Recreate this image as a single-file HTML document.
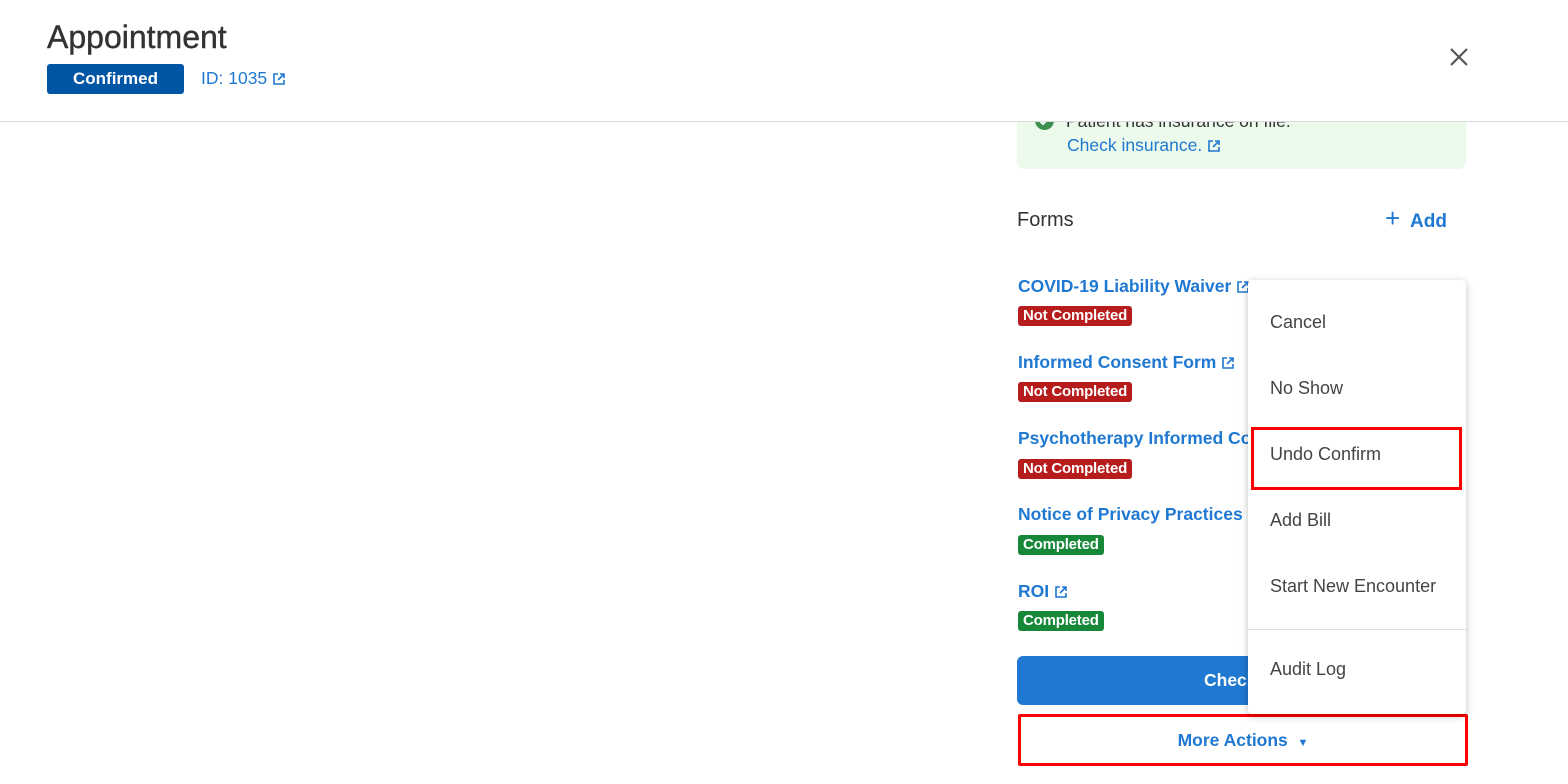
<!DOCTYPE html>
<html><head><meta charset="utf-8"><style>
*{box-sizing:border-box;margin:0;padding:0}
body{width:1568px;height:784px;overflow:hidden;background:#fff;font-family:"Liberation Sans",Arial,sans-serif;position:relative}
.abs{position:absolute}
.hdr{left:0;top:0;width:1568px;height:122px;background:#fff;border-bottom:1px solid #d9d9d9;z-index:5}
.link{color:#1f78d1}
.ext{display:inline-block;vertical-align:middle}
.badge{position:absolute;left:1018px;height:20px;padding:0 5px;border-radius:3px;color:#fff;font-weight:bold;font-size:15px;line-height:20px;letter-spacing:-0.2px}
.nc{background:#b71c1c}.c{background:#17873a}
.fl{position:absolute;left:1018px;font-size:17.5px;font-weight:bold;color:#1f78d1}
.menu{left:1248px;top:280px;width:218px;height:434px;background:#fff;border-radius:4px;box-shadow:0 2px 8px rgba(0,0,0,.25);z-index:4}
.mi{position:absolute;left:22px;font-size:18px;color:#444}
</style></head><body>
<div class="abs hdr">
 <div class="abs" style="left:47px;top:19px;font-size:32px;color:#333;-webkit-text-stroke:0.4px #333">Appointment</div>
 <div class="abs" style="left:47px;top:64px;width:137px;height:30px;background:#0055a5;border-radius:3px;color:#fff;font-weight:bold;font-size:17px;line-height:30px;text-align:center">Confirmed</div>
 <div class="abs link" style="left:201px;top:68px;font-size:17.5px">ID: 1035 <svg class="ext" width="14" height="14" viewBox="0 0 14 14"><path d="M6 2H2v10h10V8M8 2h4v4M12 2L6 8" fill="none" stroke="#1f78d1" stroke-width="1.6"/></svg></div>
 <svg class="abs" style="left:1449px;top:47px" width="20" height="20" viewBox="0 0 20 20"><path d="M2 2L18 18M18 2L2 18" stroke="#555" stroke-width="2.2"/></svg>
</div>
<div class="abs" style="left:1017px;top:90px;width:449px;height:79px;background:#ebfaeb;border-radius:8px"></div>
<svg class="abs" style="left:1035px;top:111px" width="19" height="19" viewBox="0 0 19 19"><circle cx="9.5" cy="9.5" r="9.5" fill="#3c8f4e"/><path d="M5 10l3 3 6-6" fill="none" stroke="#fff" stroke-width="2"/></svg>
<div class="abs" style="left:1066px;top:111px;font-size:17.5px;color:#333">Patient has insurance on file.</div>
<div class="abs link" style="left:1067px;top:135px;font-size:17.5px">Check insurance. <svg class="ext" width="14" height="14" viewBox="0 0 14 14"><path d="M6 2H2v10h10V8M8 2h4v4M12 2L6 8" fill="none" stroke="#1f78d1" stroke-width="1.6"/></svg></div>
<div class="abs" style="left:1017px;top:209px;font-size:20px;color:#333">Forms</div>
<div class="abs link" style="left:1385px;top:209px;font-size:19px;font-weight:bold"><span style="font-weight:normal;font-size:26px;line-height:19px">+</span>&nbsp; Add</div>
<div class="fl" style="top:276px">COVID-19 Liability Waiver <svg class="ext" width="14" height="14" viewBox="0 0 14 14"><path d="M6 2H2v10h10V8M8 2h4v4M12 2L6 8" fill="none" stroke="#1f78d1" stroke-width="1.6"/></svg></div>
<div class="badge nc" style="top:306px">Not Completed</div>
<div class="fl" style="top:352px">Informed Consent Form <svg class="ext" width="14" height="14" viewBox="0 0 14 14"><path d="M6 2H2v10h10V8M8 2h4v4M12 2L6 8" fill="none" stroke="#1f78d1" stroke-width="1.6"/></svg></div>
<div class="badge nc" style="top:382px">Not Completed</div>
<div class="fl" style="top:428px">Psychotherapy Informed Consent</div>
<div class="badge nc" style="top:459px">Not Completed</div>
<div class="fl" style="top:504px">Notice of Privacy Practices</div>
<div class="badge c" style="top:535px">Completed</div>
<div class="fl" style="top:581px">ROI <svg class="ext" width="14" height="14" viewBox="0 0 14 14"><path d="M6 2H2v10h10V8M8 2h4v4M12 2L6 8" fill="none" stroke="#1f78d1" stroke-width="1.6"/></svg></div>
<div class="badge c" style="top:611px">Completed</div>
<div class="abs" style="left:1017px;top:656px;width:449px;height:49px;background:#1f78d1;border-radius:6px;color:#fff;font-weight:bold;font-size:17.5px;line-height:49px;padding-left:187px">Check In</div>
<div class="abs" style="left:1018px;top:714px;width:450px;height:52px;border:3px solid #f00;border-radius:2px;color:#1f78d1;font-weight:bold;font-size:17.5px;line-height:46px;text-align:center">More Actions &nbsp;<span style="font-size:11px">▼</span></div>
<div class="abs menu">
 <div class="mi" style="top:32px">Cancel</div>
 <div class="mi" style="top:98px">No Show</div>
 <div class="mi" style="top:164px">Undo Confirm</div>
 <div class="mi" style="top:230px">Add Bill</div>
 <div class="mi" style="top:296px">Start New Encounter</div>
 <div class="abs" style="left:0;top:349px;width:218px;height:1px;background:#ddd"></div>
 <div class="mi" style="top:379px">Audit Log</div>
 <div class="abs" style="left:3px;top:147px;width:211px;height:63px;border:3px solid #f00"></div>
</div>
</body></html>
